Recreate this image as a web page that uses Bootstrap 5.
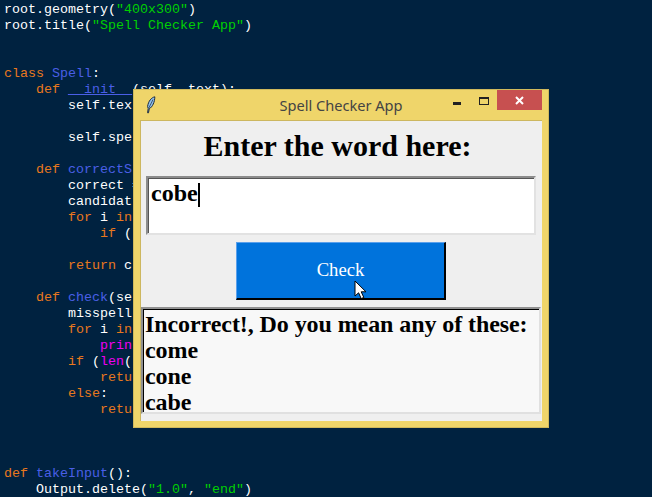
<!DOCTYPE html>
<html lang="en">
<head>
<meta charset="utf-8">
<title>Spell Checker App</title>
<link href="https://cdn.jsdelivr.net/npm/bootstrap@5.3.0/dist/css/bootstrap.min.css" rel="stylesheet">
<style>
html,body{width:652px;height:497px;overflow:hidden;margin:0;background:#002240}
.code-pane{padding:2px 0 0 4px;font:13.333px/16px "Liberation Mono",monospace;color:#fff;background:#002240;height:497px;overflow:hidden}
.code-line{height:16px;white-space:pre}
.kw{color:#e8781e}.fn{color:#4a5fe6}.st{color:#00d000}.bi-fn{color:#f000f0}
.tk-window{position:absolute;left:133px;top:89px;width:416px;height:339px;background:#efd56a;border:1px solid #d0b95c}
.tk-title{height:30px}
.tk-title-text{font:14.6px/20px "Noto Sans",sans-serif;color:#444;left:0;right:0;top:5px;text-align:center;position:absolute}
.feather{position:absolute;left:12px;top:6px}
.win-min{position:absolute;left:319px;top:12px;width:8px;height:3px;background:#222}
.win-max{position:absolute;left:345px;top:7px;width:10px;height:8px;border:1px solid #222;border-top-width:2px}
.win-close{position:absolute;left:363px;top:0;width:45px;height:20px;background:#c75050;color:#fff}
.tk-client{position:absolute;left:6px;top:30px;width:402px;height:301px;background:#efefef;border-top:1px solid #cdb75f;border-left:1px solid #cdb75f;font-family:"Liberation Serif",serif}
.tk-heading{font:bold 30px/34px "Liberation Serif",serif;color:#000;text-align:center;margin:8px 0 13px -8px}
.tk-entry{margin:0 6px 0 5px;height:59px;background:#fff;border-top:2px solid #8c8c8c;border-left:2px solid #8c8c8c;border-right:2px solid #e2e2e2;border-bottom:2px solid #e2e2e2;box-shadow:inset 1px 1px 0 #555;padding:2px 0 0 3px;font:bold 24px/26px "Liberation Serif",serif;color:#000}
.caret-bar{display:inline-block;width:2px;height:24px;background:#000;vertical-align:-6px}
.tk-btn-row{margin-top:7px;padding-left:95px}
.tk-btn{width:210px;height:58px;background:#0073dc;color:#fff;font:18.67px/1 "Liberation Serif",serif;border-radius:0;border-style:solid;border-width:1px 2px 2px 1px;border-color:#5aa0ec #000 #000 #5aa0ec;padding:0}
.tk-output{margin:7px 0 0 0;width:400px;height:107px;overflow:hidden;background:#f8f8f8;border-top:2px solid #909090;border-left:2px solid #909090;border-right:2px solid #e0e0e0;border-bottom:2px solid #e0e0e0;box-shadow:inset 1px 1px 0 #000;padding:2px 0 0 2px;font:bold 24px/26px "Liberation Serif",serif;letter-spacing:-.08px;color:#000}
.out-line{height:26px;white-space:pre}
.pointer{position:absolute;left:354px;top:280px}
</style>
</head>
<body>
<div class="code-pane">
<div class="code-line">root.geometry(<span class="st">"400x300"</span>)</div>
<div class="code-line">root.title(<span class="st">"Spell Checker App"</span>)</div>
<div class="code-line"> </div>
<div class="code-line"> </div>
<div class="code-line"><span class="kw">class</span> <span class="fn">Spell</span>:</div>
<div class="code-line">    <span class="kw">def</span> <span class="fn"><u>__init__</u></span>(self, text):</div>
<div class="code-line">        self.tex</div>
<div class="code-line"> </div>
<div class="code-line">        self.spe</div>
<div class="code-line"> </div>
<div class="code-line">    <span class="kw">def</span> <span class="fn">correctS</span></div>
<div class="code-line">        correct =</div>
<div class="code-line">        candidat</div>
<div class="code-line">        <span class="kw">for</span> i <span class="kw">in</span></div>
<div class="code-line">            <span class="kw">if</span> (</div>
<div class="code-line"> </div>
<div class="code-line">        <span class="kw">return</span> c</div>
<div class="code-line"> </div>
<div class="code-line">    <span class="kw">def</span> <span class="fn">check</span>(se</div>
<div class="code-line">        misspell</div>
<div class="code-line">        <span class="kw">for</span> i <span class="kw">in</span></div>
<div class="code-line">            <span class="bi-fn">prin</span></div>
<div class="code-line">        <span class="kw">if</span> (<span class="bi-fn">len</span>(</div>
<div class="code-line">            <span class="kw">retu</span></div>
<div class="code-line">        <span class="kw">else</span>:</div>
<div class="code-line">            <span class="kw">retu</span></div>
<div class="code-line"> </div>
<div class="code-line"> </div>
<div class="code-line"> </div>
<div class="code-line"><span class="kw">def</span> <span class="fn">takeInput</span>():</div>
<div class="code-line">    Output.delete(<span class="st">"1.0"</span>, <span class="st">"end"</span>)</div>
</div>

<div class="tk-window">
  <div class="tk-title">
    <svg class="feather" width="10" height="18" viewBox="0 0 10 18" aria-hidden="true"><path d="M8.8 0.8C5.5 1.5 2.3 5 1.6 10.5L2.2 12.5L1.6 16.8L2.5 16.8L3.2 12.8C6.5 11 8.8 6 8.8 0.8Z" fill="#8fc0ee" stroke="#1c2a3c" stroke-width="1"/><path d="M7 3.5L2.8 12" stroke="#1c2a3c" stroke-width=".7" fill="none"/></svg>
    <div class="tk-title-text">Spell Checker App</div>
    <div class="win-min"></div>
    <div class="win-max"></div>
    <div class="win-close d-flex align-items-center justify-content-center">
      <svg width="9" height="9" viewBox="0 0 9 9" aria-hidden="true"><path d="M1 1L8 8M8 1L1 8" stroke="#fff" stroke-width="2"/></svg>
    </div>
  </div>
  <div class="tk-client d-flex flex-column">
    <div class="tk-heading">Enter the word here:</div>
    <div class="tk-entry"><span>cobe</span><span class="caret-bar"></span></div>
    <div class="tk-btn-row d-flex"><button type="button" class="btn tk-btn">Check</button></div>
    <div class="tk-output">
      <div class="out-line">Incorrect!, Do you mean any of these:</div>
      <div class="out-line">come</div>
      <div class="out-line">cone</div>
      <div class="out-line">cabe</div>
    </div>
  </div>
</div>

<svg class="pointer" width="14" height="20" viewBox="0 0 14 20" aria-hidden="true"><path d="M1 1V16L4.6 12.8L7.2 18.6L9.8 17.4L7.2 11.8H12Z" fill="#fff" stroke="#000" stroke-width="1"/></svg>
</body>
</html>
